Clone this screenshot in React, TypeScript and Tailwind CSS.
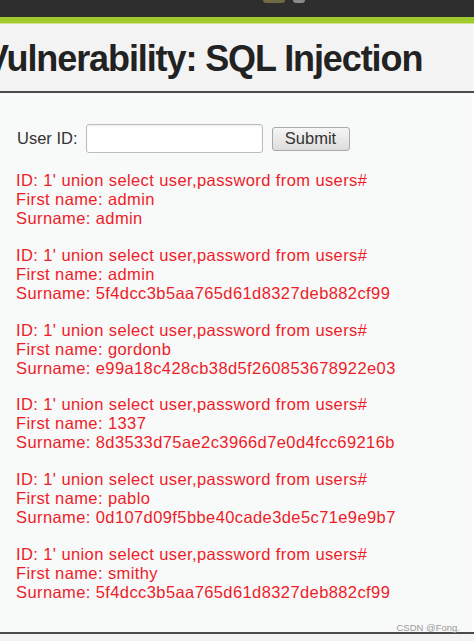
import React from 'react';

const rows = [
  { first: 'admin', last: 'admin' },
  { first: 'admin', last: '5f4dcc3b5aa765d61d8327deb882cf99' },
  { first: 'gordonb', last: 'e99a18c428cb38d5f260853678922e03' },
  { first: '1337', last: '8d3533d75ae2c3966d7e0d4fcc69216b' },
  { first: 'pablo', last: '0d107d09f5bbe40cade3de5c71e9e9b7' },
  { first: 'smithy', last: '5f4dcc3b5aa765d61d8327deb882cf99' },
];

const query = "1' union select user,password from users#";

export default function App() {
  return (
    <div className="w-[474px] h-[641px] overflow-hidden bg-white font-['Liberation_Sans',Arial,sans-serif]">
      {/* top bar with the cut-off logo */}
      <div className="h-[17px] bg-[#2e2e2e] flex items-start pl-[263px] gap-[8px]">
        <div className="w-[22px] h-[3px] rounded-b-full bg-[#6f6a45]" />
        <div className="w-[12px] h-[3px] rounded-b-full bg-[#8a8a8a]" />
      </div>
      <div className="h-[6px] bg-[#a0ca2e]" />
      <div className="h-px bg-[#cde48a]" />

      {/* page heading */}
      <div className="flex">
        <div className="w-[472px] h-[67px] bg-[#f3f3f3] pt-[17px] overflow-hidden">
          <h1 className="ml-[-15px] whitespace-nowrap text-[36px] leading-[36px] font-bold tracking-[-1.1px] text-[#222]">
            Vulnerability: SQL Injection
          </h1>
        </div>
        <div className="flex-1 bg-[#f7f7f7]" />
      </div>
      <div className="h-[2px] bg-[#4a4a4a]" />

      {/* vulnerable code area */}
      <div className="flex">
        <div className="w-[472px] h-[539px] bg-[#f8f9f9] pt-[31px] pl-[17px] relative">
          <form className="flex items-center h-[29px]" onSubmit={(e) => e.preventDefault()}>
            <label className="text-[16.5px] text-[#333] mr-[8px]">User ID:</label>
            <input
              type="text"
              className="w-[177px] h-[29px] bg-white border border-[#bdbdbd] rounded-[3px] shadow-[inset_0_1px_2px_rgba(0,0,0,0.08)] outline-none"
            />
            <button
              type="submit"
              className="ml-[9px] w-[78px] h-[24px] rounded-[3px] border border-[#a9a9a9] bg-gradient-to-b from-[#f6f6f6] to-[#dcdcdc] text-[16.5px] leading-none text-[#333]"
            >
              Submit
            </button>
          </form>

          <div className="mt-[18px] ml-[-1px] flex flex-col gap-[17.8px] text-[16.5px] leading-[19px] tracking-[0.4px] text-[#ee1c28]">
            {rows.map((r, i) => (
              <div key={i} className="whitespace-pre">
                <div>ID: {query}</div>
                <div>First name: {r.first}</div>
                <div>Surname: {r.last}</div>
              </div>
            ))}
          </div>

          <span className="absolute right-[12px] bottom-[-3px] text-[9.5px] text-[#9a9a9a]">
            CSDN @Fong.
          </span>
        </div>
        <div className="flex-1 bg-white" />
      </div>
      <div className="h-[2px] bg-[#4a4a4a]" />
      <div className="h-[7px] bg-[#f3f3f3]" />
    </div>
  );
}
